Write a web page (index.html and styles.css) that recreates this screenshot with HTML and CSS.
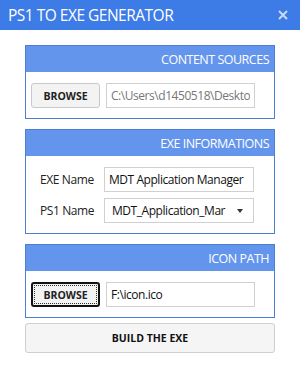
FILE: index.html
```html
<!DOCTYPE html>
<html lang="en">
<head>
  <meta charset="UTF-8" />
  <title>PS1 to EXE Generator</title>
  <link rel="stylesheet" href="styles.css">
</head>
<body>
  <div class="window">
    <div class="titlebar">
      <span class="title">PS1 TO EXE GENERATOR</span>
      <svg class="close" width="10" height="10" viewBox="0 0 10 10">
        <path d="M1 1 L9 9 M9 1 L1 9" stroke="#c9d9f7" stroke-width="2" />
      </svg>
    </div>

    <div class="content">
      <div class="panel">
        <div class="panel-head">CONTENT SOURCES</div>
        <div class="panel-body row">
          <button class="browse">BROWSE</button>
          <input type="text" class="field muted" value="C:\Users\d1450518\Desktop\Scripts" />
        </div>
      </div>

      <div class="panel">
        <div class="panel-head">EXE INFORMATIONS</div>
        <div class="panel-body form">
          <label for="exeName">EXE Name</label>
          <input type="text" id="exeName" class="field wide" value="MDT Application Manager" />
          <label for="ps1Name">PS1 Name</label>
          <div class="select wide" id="ps1Name">
            <span class="select-text">MDT_Application_Mar</span>
            <span class="arrow"></span>
          </div>
        </div>
      </div>

      <div class="panel">
        <div class="panel-head">ICON PATH</div>
        <div class="panel-body row">
          <button class="browse focused">BROWSE</button>
          <input type="text" class="field" value="F:\icon.ico" />
        </div>
      </div>

      <button class="build">BUILD THE EXE</button>
    </div>
  </div>
</body>
</html>
```

FILE: styles.css
```css
body {
  margin: 0;
  font-family: "Open Sans", "Noto Sans", sans-serif;
  background: #fff;
}

.window {
  width: 300px;
  height: 365px;
  background: #fff;
}

.titlebar {
  height: 30px;
  background: #3d7be6;
  color: #fff;
  display: flex;
  align-items: center;
  justify-content: space-between;
  padding: 0 12px 0 8px;
}

.title {
  font-size: 15.5px;
  letter-spacing: -0.5px;
}

.close {
  display: block;
}

.content {
  padding: 15px 25px 0;
  display: flex;
  flex-direction: column;
  gap: 10px;
}

.panel {
  border: 1px solid #4b7fd6;
}

.panel-head {
  height: 26px;
  background: #6495ed;
  color: #fff;
  font-size: 12.5px;
  letter-spacing: -0.5px;
  line-height: 27px;
  text-align: right;
  padding-right: 5px;
}

.panel-body {
  padding: 11px 5px 10px;
}

.row {
  display: flex;
  gap: 6px;
}

.browse {
  width: 69px;
  height: 25px;
  padding: 0;
  background: #f3f3f3;
  border: 1px solid #c9c9c9;
  border-radius: 3px;
  font-family: inherit;
  font-size: 10.5px;
  font-weight: bold;
  color: #222;
}

.browse.focused {
  border: 2px solid #111;
  outline: 1px dotted #333;
  outline-offset: -4px;
}

.field {
  box-sizing: border-box;
  width: 149px;
  height: 25px;
  border: 1px solid #d0d0d0;
  padding: 0 4px;
  font-family: inherit;
  font-size: 12px;
  letter-spacing: -0.45px;
  color: #111;
}

.field.muted {
  color: #777;
}

.form {
  display: grid;
  grid-template-columns: 64px 150px;
  row-gap: 6px;
  align-items: center;
  padding-left: 14px;
}

.form label {
  font-size: 12px;
  letter-spacing: -0.4px;
  color: #222;
}

.wide {
  width: 150px;
}

.select {
  box-sizing: border-box;
  height: 25px;
  border: 1px solid #d0d0d0;
  display: flex;
  align-items: center;
  padding: 0 10px 0 7px;
  gap: 8px;
}

.select-text {
  flex: 1;
  white-space: nowrap;
  font-size: 12px;
  letter-spacing: -0.45px;
  color: #111;
}

.arrow {
  width: 0;
  height: 0;
  border-left: 3.5px solid transparent;
  border-right: 3.5px solid transparent;
  border-top: 4px solid #333;
}

.build {
  margin-top: -5px;
  height: 30px;
  background: #f5f5f5;
  border: 1px solid #cfcfcf;
  border-radius: 3px;
  font-family: inherit;
  font-size: 10.5px;
  font-weight: bold;
  color: #111;
}
```
